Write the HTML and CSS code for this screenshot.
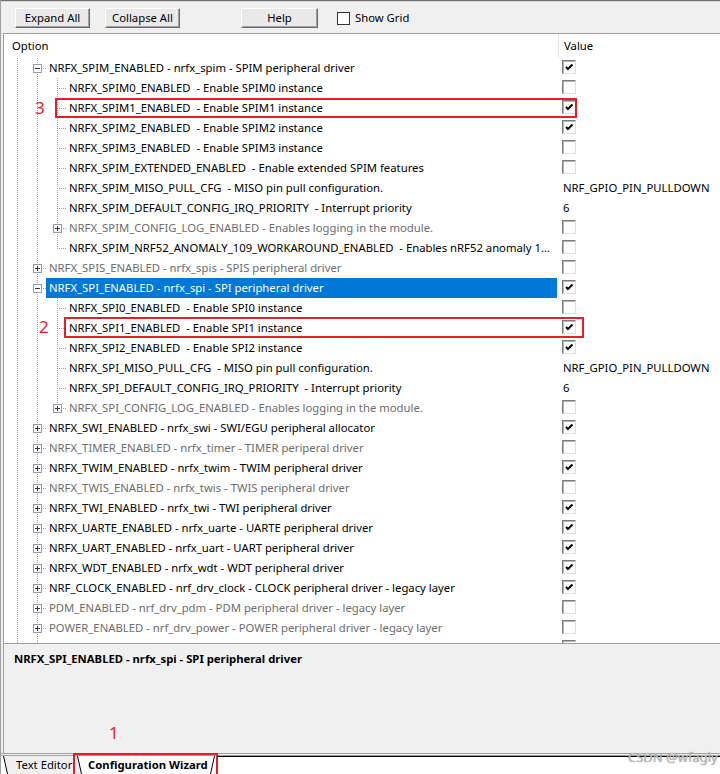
FILE: index.html
```html
<!DOCTYPE html>
<html>
<head>
<meta charset="utf-8">
<link rel="stylesheet" href="styles.css">
</head>
<body>
<div class="window">
  <div class="toolbar">
    <span class="btn b1">Expand All</span>
    <span class="btn b2">Collapse All</span>
    <span class="btn b3">Help</span>
    <span class="tbcheck"></span>
    <span class="tblabel">Show Grid</span>
  </div>

  <div class="tree">
    <div class="hdr"><div class="hopt">Option</div><div class="hval">Value</div></div>

    <div class="row"><div class="opt"><i class="g v"></i><i class="g t"><b class="ex minus"></b></i><span class="lbl">NRFX_SPIM_ENABLED - nrfx_spim - SPIM peripheral driver</span></div><div class="val"><span class="cb"><svg viewBox="0 0 12 12"><path d="M3 6 L5 8 L9.5 3.5"/></svg></span></div></div>
    <div class="row"><div class="opt"><i class="g v"></i><i class="g v"></i><i class="g t"></i><span class="lbl">NRFX_SPIM0_ENABLED  - Enable SPIM0 instance</span></div><div class="val"><span class="cb"></span></div></div>
    <div class="row"><div class="opt"><i class="g v"></i><i class="g v"></i><i class="g t"></i><span class="lbl">NRFX_SPIM1_ENABLED  - Enable SPIM1 instance</span></div><div class="val"><span class="cb"><svg viewBox="0 0 12 12"><path d="M3 6 L5 8 L9.5 3.5"/></svg></span></div><span class="mark m3"></span><span class="num n3">3</span></div>
    <div class="row"><div class="opt"><i class="g v"></i><i class="g v"></i><i class="g t"></i><span class="lbl">NRFX_SPIM2_ENABLED  - Enable SPIM2 instance</span></div><div class="val"><span class="cb"><svg viewBox="0 0 12 12"><path d="M3 6 L5 8 L9.5 3.5"/></svg></span></div></div>
    <div class="row"><div class="opt"><i class="g v"></i><i class="g v"></i><i class="g t"></i><span class="lbl">NRFX_SPIM3_ENABLED  - Enable SPIM3 instance</span></div><div class="val"><span class="cb"></span></div></div>
    <div class="row"><div class="opt"><i class="g v"></i><i class="g v"></i><i class="g t"></i><span class="lbl">NRFX_SPIM_EXTENDED_ENABLED  - Enable extended SPIM features</span></div><div class="val"><span class="cb"></span></div></div>
    <div class="row"><div class="opt"><i class="g v"></i><i class="g v"></i><i class="g t"></i><span class="lbl">NRFX_SPIM_MISO_PULL_CFG  - MISO pin pull configuration.</span></div><div class="val"><span class="vt">NRF_GPIO_PIN_PULLDOWN</span></div></div>
    <div class="row"><div class="opt"><i class="g v"></i><i class="g v"></i><i class="g t"></i><span class="lbl">NRFX_SPIM_DEFAULT_CONFIG_IRQ_PRIORITY  - Interrupt priority</span></div><div class="val"><span class="vt">6</span></div></div>
    <div class="row"><div class="opt"><i class="g v"></i><i class="g v"></i><i class="g t"><b class="ex plus"></b></i><span class="lbl dim">NRFX_SPIM_CONFIG_LOG_ENABLED - Enables logging in the module.</span></div><div class="val"><span class="cb"></span></div></div>
    <div class="row"><div class="opt"><i class="g v"></i><i class="g v"></i><i class="g l"></i><span class="lbl">NRFX_SPIM_NRF52_ANOMALY_109_WORKAROUND_ENABLED  - Enables nRF52 anomaly 1...</span></div><div class="val"><span class="cb"></span></div></div>
    <div class="row"><div class="opt"><i class="g v"></i><i class="g t"><b class="ex plus"></b></i><span class="lbl dim">NRFX_SPIS_ENABLED - nrfx_spis - SPIS peripheral driver</span></div><div class="val"><span class="cb"></span></div></div>
    <div class="row"><div class="opt"><i class="g v"></i><i class="g t"><b class="ex minus"></b></i><span class="lbl sel">NRFX_SPI_ENABLED - nrfx_spi - SPI peripheral driver</span></div><div class="val"><span class="cb"><svg viewBox="0 0 12 12"><path d="M3 6 L5 8 L9.5 3.5"/></svg></span></div></div>
    <div class="row"><div class="opt"><i class="g v"></i><i class="g v"></i><i class="g t"></i><span class="lbl">NRFX_SPI0_ENABLED  - Enable SPI0 instance</span></div><div class="val"><span class="cb"></span></div></div>
    <div class="row"><div class="opt"><i class="g v"></i><i class="g v"></i><i class="g t"></i><span class="lbl">NRFX_SPI1_ENABLED  - Enable SPI1 instance</span></div><div class="val"><span class="cb"><svg viewBox="0 0 12 12"><path d="M3 6 L5 8 L9.5 3.5"/></svg></span></div><span class="mark m2"></span><span class="num n2">2</span></div>
    <div class="row"><div class="opt"><i class="g v"></i><i class="g v"></i><i class="g t"></i><span class="lbl">NRFX_SPI2_ENABLED  - Enable SPI2 instance</span></div><div class="val"><span class="cb"><svg viewBox="0 0 12 12"><path d="M3 6 L5 8 L9.5 3.5"/></svg></span></div></div>
    <div class="row"><div class="opt"><i class="g v"></i><i class="g v"></i><i class="g t"></i><span class="lbl">NRFX_SPI_MISO_PULL_CFG  - MISO pin pull configuration.</span></div><div class="val"><span class="vt">NRF_GPIO_PIN_PULLDOWN</span></div></div>
    <div class="row"><div class="opt"><i class="g v"></i><i class="g v"></i><i class="g t"></i><span class="lbl">NRFX_SPI_DEFAULT_CONFIG_IRQ_PRIORITY  - Interrupt priority</span></div><div class="val"><span class="vt">6</span></div></div>
    <div class="row"><div class="opt"><i class="g v"></i><i class="g v"></i><i class="g l"><b class="ex plus"></b></i><span class="lbl dim">NRFX_SPI_CONFIG_LOG_ENABLED - Enables logging in the module.</span></div><div class="val"><span class="cb"></span></div></div>
    <div class="row"><div class="opt"><i class="g v"></i><i class="g t"><b class="ex plus"></b></i><span class="lbl">NRFX_SWI_ENABLED - nrfx_swi - SWI/EGU peripheral allocator</span></div><div class="val"><span class="cb"><svg viewBox="0 0 12 12"><path d="M3 6 L5 8 L9.5 3.5"/></svg></span></div></div>
    <div class="row"><div class="opt"><i class="g v"></i><i class="g t"><b class="ex plus"></b></i><span class="lbl dim">NRFX_TIMER_ENABLED - nrfx_timer - TIMER periperal driver</span></div><div class="val"><span class="cb"></span></div></div>
    <div class="row"><div class="opt"><i class="g v"></i><i class="g t"><b class="ex plus"></b></i><span class="lbl">NRFX_TWIM_ENABLED - nrfx_twim - TWIM peripheral driver</span></div><div class="val"><span class="cb"><svg viewBox="0 0 12 12"><path d="M3 6 L5 8 L9.5 3.5"/></svg></span></div></div>
    <div class="row"><div class="opt"><i class="g v"></i><i class="g t"><b class="ex plus"></b></i><span class="lbl dim">NRFX_TWIS_ENABLED - nrfx_twis - TWIS peripheral driver</span></div><div class="val"><span class="cb"></span></div></div>
    <div class="row"><div class="opt"><i class="g v"></i><i class="g t"><b class="ex plus"></b></i><span class="lbl">NRFX_TWI_ENABLED - nrfx_twi - TWI peripheral driver</span></div><div class="val"><span class="cb"><svg viewBox="0 0 12 12"><path d="M3 6 L5 8 L9.5 3.5"/></svg></span></div></div>
    <div class="row"><div class="opt"><i class="g v"></i><i class="g t"><b class="ex plus"></b></i><span class="lbl">NRFX_UARTE_ENABLED - nrfx_uarte - UARTE peripheral driver</span></div><div class="val"><span class="cb"><svg viewBox="0 0 12 12"><path d="M3 6 L5 8 L9.5 3.5"/></svg></span></div></div>
    <div class="row"><div class="opt"><i class="g v"></i><i class="g t"><b class="ex plus"></b></i><span class="lbl">NRFX_UART_ENABLED - nrfx_uart - UART peripheral driver</span></div><div class="val"><span class="cb"><svg viewBox="0 0 12 12"><path d="M3 6 L5 8 L9.5 3.5"/></svg></span></div></div>
    <div class="row"><div class="opt"><i class="g v"></i><i class="g t"><b class="ex plus"></b></i><span class="lbl">NRFX_WDT_ENABLED - nrfx_wdt - WDT peripheral driver</span></div><div class="val"><span class="cb"><svg viewBox="0 0 12 12"><path d="M3 6 L5 8 L9.5 3.5"/></svg></span></div></div>
    <div class="row"><div class="opt"><i class="g v"></i><i class="g t"><b class="ex plus"></b></i><span class="lbl">NRF_CLOCK_ENABLED - nrf_drv_clock - CLOCK peripheral driver - legacy layer</span></div><div class="val"><span class="cb"><svg viewBox="0 0 12 12"><path d="M3 6 L5 8 L9.5 3.5"/></svg></span></div></div>
    <div class="row"><div class="opt"><i class="g v"></i><i class="g t"><b class="ex plus"></b></i><span class="lbl dim">PDM_ENABLED - nrf_drv_pdm - PDM peripheral driver - legacy layer</span></div><div class="val"><span class="cb"></span></div></div>
    <div class="row"><div class="opt"><i class="g v"></i><i class="g t"><b class="ex plus"></b></i><span class="lbl dim">POWER_ENABLED - nrf_drv_power - POWER peripheral driver - legacy layer</span></div><div class="val"><span class="cb"></span></div></div>
    <div class="row"><div class="opt"><i class="g v"></i><i class="g t"><b class="ex plus"></b></i><span class="lbl"></span></div><div class="val"><span class="cb"></span></div></div>
  </div>

  <div class="desc">NRFX_SPI_ENABLED - nrfx_spi - SPI peripheral driver</div>

  <div class="tabs">
    <div class="tabrow">
      <svg class="sl1" width="10" height="18" viewBox="0 0 10 18"><polygon points="2.5,0 10,0 10,18 6.5,18" fill="#f0f0f0"/><line x1="2.5" y1="0" x2="6.5" y2="18" stroke="#000" stroke-width="1"/></svg>
      <span class="tab t1">Text Editor</span>
      <svg class="sl2" width="8" height="18" viewBox="0 0 8 18"><polygon points="0,0 0.5,0 4.5,18 0,18" fill="#f0f0f0"/><line x1="0.5" y1="0" x2="4.5" y2="18" stroke="#000" stroke-width="1"/></svg>
      <span class="tab t2">Configuration Wizard</span>
      <svg class="sl3" width="6" height="18" viewBox="0 0 6 18"><line x1="4.5" y1="0" x2="0.5" y2="18" stroke="#000" stroke-width="1"/></svg>
      <span class="filler"></span>
    </div>
  </div>

  <span class="mark m1"></span>
  <span class="num n1">1</span>
  <span class="wm">CSDN @wfagly</span>
</div>
</body>
</html>
```

FILE: styles.css
```css
* { box-sizing: border-box; }
html, body { margin: 0; padding: 0; background: #fff; }
body { font-family: "Noto Sans", "Open Sans", sans-serif; font-size: 11.3px; color: #000; }

.window {
  position: relative;
  width: 720px;
  height: 774px;
  overflow: hidden;
  border-left: 1px solid #a0a0a0;
  background: #f0f0f0;
}

/* toolbar */
.toolbar {
  height: 33px;
  display: flex;
  align-items: flex-start;
  padding: 7px 0 0 14px;
  border-top: 1px solid #6f6f6f;
  box-shadow: inset 0 1px #d9d9d9;
  background: #f0f0f0;
}
.btn {
  display: block;
  height: 20px;
  line-height: 18px;
  text-align: center;
  background: #e9e9e9;
  border: 1px solid;
  border-color: #fdfdfd #6a6a6a #6a6a6a #fdfdfd;
  box-shadow: inset -1px -1px #a0a0a0;
  white-space: nowrap;
}
.b1 { width: 75px; }
.b2 { width: 75px; margin-left: 15px; }
.b3 { width: 77px; margin-left: 61px; }
.tbcheck {
  display: block;
  width: 13px;
  height: 13px;
  margin: 4px 0 0 19px;
  border: 1px solid #333;
  background: #fff;
}
.tblabel { margin-left: 5px; line-height: 20px; }

/* tree */
.tree {
  height: 610px;
  margin-left: 2px;
  border-top: 1px solid #a0a0a0;
  border-left: 1px solid #a0a0a0;
  background: #fff;
  overflow: hidden;
}
.hdr { display: flex; height: 24px; line-height: 24px; }
.hopt { width: 554px; padding-left: 8px; }
.hval { flex: 1; border-left: 1px solid #e5e5e5; padding-left: 5px; }

.row { position: relative; display: flex; height: 20px; }
.opt {
  width: 554px;
  flex: none;
  display: flex;
  padding-left: 3px;
}
.g { display: block; flex: none; width: 20px; height: 20px; }
.v {
  background: repeating-linear-gradient(to bottom, #a0a0a0 0 1px, transparent 1px 2px) 10px 0 / 1px 20px no-repeat;
}
.t {
  background:
    repeating-linear-gradient(to bottom, #a0a0a0 0 1px, transparent 1px 2px) 10px 0 / 1px 20px no-repeat,
    repeating-linear-gradient(to right, #a0a0a0 0 1px, transparent 1px 2px) 12px 10px / 8px 1px no-repeat;
}
.l {
  background:
    repeating-linear-gradient(to bottom, #a0a0a0 0 1px, transparent 1px 2px) 10px 0 / 1px 11px no-repeat,
    repeating-linear-gradient(to right, #a0a0a0 0 1px, transparent 1px 2px) 12px 10px / 8px 1px no-repeat;
}
.ex {
  display: block;
  width: 9px;
  height: 9px;
  margin: 6px 0 0 6px;
  border: 1px solid #929cae;
}
.minus {
  background: linear-gradient(#23375a, #23375a) center / 5px 1px no-repeat, #fff;
}
.plus {
  background:
    linear-gradient(#23375a, #23375a) center / 5px 1px no-repeat,
    linear-gradient(#23375a, #23375a) center / 1px 5px no-repeat,
    #fff;
}
.lbl {
  flex: 1;
  min-width: 0;
  overflow: hidden;
  white-space: pre;
  line-height: 20px;
  padding-left: 2px;
}
.dim { color: #6d6d6d; }
.sel {
  background: #0078d7;
  color: #fff;
  margin-left: -1px;
  padding-left: 3px;
  margin-right: 1px;
}
.val { flex: 1; }
.cb {
  display: block;
  width: 14px;
  height: 14px;
  margin: 2px 0 0 4px;
  border: 1px solid;
  border-color: #7c7c7c #dedede #dedede #7c7c7c;
  box-shadow: inset 1px 1px #b4b4b4;
  background: #fff;
}
.cb svg { display: block; width: 12px; height: 12px; }
.cb path { fill: none; stroke: #000; stroke-width: 2; }
.vt { display: block; line-height: 20px; padding-left: 5px; white-space: nowrap; }

/* description */
.desc {
  height: 110px;
  margin-left: 2px;
  border-top: 1px solid #a0a0a0;
  border-left: 1px solid #a0a0a0;
  background: #f0f0f0;
  padding: 7px 0 0 10px;
  line-height: 16px;
  font-weight: bold;
}

/* tabs */
.tabs {
  height: 21px;
  padding-top: 3px;
  background: linear-gradient(to bottom, #a0a0a0 0 1px, #f0f0f0 1px 2px, #a0a0a0 2px 3px, #fff 3px);
}
.tabrow { display: flex; height: 18px; }
.tabrow svg { display: block; flex: none; }
.tab { display: block; flex: none; line-height: 18px; white-space: nowrap; }
.t1 { width: 66px; padding-left: 5px; background: #f0f0f0; }
.t2 { width: 125px; padding-left: 3px; font-weight: bold; background: #fff; }
.filler { flex: 1; border-top: 1px solid #000; }

/* annotations */
.mark { position: absolute; border: 2px solid #e3202a; }
.m3 { left: 51px; top: 0; width: 522px; height: 20px; }
.m2 { left: 60px; top: -1px; width: 520px; height: 21px; }
.m1 { left: 72px; top: 753px; width: 145px; height: 26px; }
.num {
  position: absolute;
  color: #e3202a;
  font-size: 17px;
  line-height: 17px;
  font-weight: normal;
}
.n3 { left: 31px; top: 1px; }
.n2 { left: 35px; top: 0; }
.n1 { left: 108px; top: 724px; }
.wm {
  position: absolute;
  left: 627px;
  top: 749px;
  font-size: 13px;
  line-height: 16px;
  color: #bdbdbd;
  text-shadow: 0 0 1px #8c8c8c;
  white-space: nowrap;
}
```
